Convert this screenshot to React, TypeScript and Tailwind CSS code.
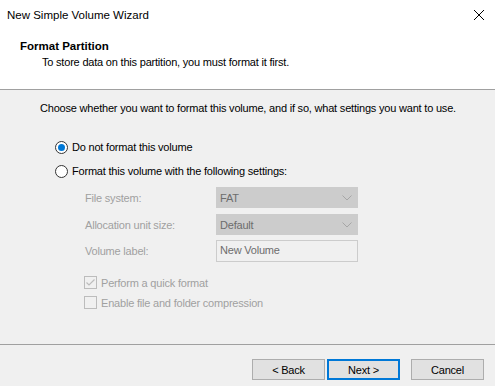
import React from "react";

const font = { fontFamily: '"Liberation Sans", Arial, sans-serif' };

function Chevron() {
  return (
    <svg width="10" height="6" viewBox="0 0 10 6" className="block">
      <path d="M0.5 0.5 L5 5 L9.5 0.5" fill="none" stroke="#a6a6a6" strokeWidth="1" />
    </svg>
  );
}

function Combo({ value }: { value: string }) {
  return (
    <div className="w-[142px] h-[21px] bg-[#cccccc] border border-[#cccccc] flex items-center justify-between pl-[3px] pr-[5px] text-[#6d6d6d]">
      <span>{value}</span>
      <Chevron />
    </div>
  );
}

function Radio({ checked, label }: { checked?: boolean; label: string }) {
  return (
    <div className="flex items-center h-[16px]">
      <div className="w-[13px] h-[13px] rounded-full border border-[#333333] bg-white flex items-center justify-center">
        {checked && <div className="w-[7px] h-[7px] rounded-full bg-[#0078d7]" />}
      </div>
      <span className="ml-[4px] text-black">{label}</span>
    </div>
  );
}

function Check({ checked, label }: { checked?: boolean; label: string }) {
  return (
    <div className="flex items-center h-[13px]">
      <div className="w-[13px] h-[13px] border border-[#bcbcbc] bg-[#f0f0f0] flex items-center justify-center">
        {checked && (
          <svg width="11" height="11" viewBox="0 0 11 11" className="block">
            <path d="M1.5 5.5 L4 8 L9.5 2.5" fill="none" stroke="#bcbcbc" strokeWidth="1.2" />
          </svg>
        )}
      </div>
      <span className="ml-[4px] text-[#a0a0a0]">{label}</span>
    </div>
  );
}

function Button({ label, primary }: { label: string; primary?: boolean }) {
  return (
    <button
      className={
        "w-[73px] h-[21px] bg-[#e1e1e1] flex items-center justify-center text-black " +
        (primary ? "border-2 border-[#0078d7]" : "border border-[#adadad]")
      }
    >
      {label}
    </button>
  );
}

export default function App() {
  return (
    <div
      className="w-[495px] h-[386px] flex flex-col bg-[#f0f0f0] text-[11px] tracking-[-0.2px] leading-[16px] overflow-hidden whitespace-nowrap"
      style={font}
    >
      {/* title bar */}
      <div className="h-[30px] bg-white flex items-center justify-between pl-[7px] pr-[11px] text-[11.5px] tracking-normal">
        <span className="text-black">New Simple Volume Wizard</span>
        <svg width="10" height="10" viewBox="0 0 10 10" className="block">
          <path d="M0 0 L10 10 M10 0 L0 10" stroke="#000" strokeWidth="1" />
        </svg>
      </div>

      {/* header */}
      <div className="h-[60px] bg-white border-b border-[#a0a0a0] pt-[8px]">
        <div className="pl-[20px] font-bold text-black text-[11.5px] tracking-normal">Format Partition</div>
        <div className="pl-[42px] text-black">To store data on this partition, you must format it first.</div>
      </div>

      {/* body */}
      <div className="flex-1 pt-[10px] pl-[40px]">
        <div className="text-black">
          Choose whether you want to format this volume, and if so, what settings you want to use.
        </div>
        <div className="mt-[23px] ml-[15px] flex flex-col gap-[8px]">
          <Radio checked label="Do not format this volume" />
          <Radio label="Format this volume with the following settings:" />
        </div>
        <div className="ml-[44px] mt-[8px] flex flex-col text-[#a0a0a0]">
          <div className="flex items-center h-[21px]">
            <span className="w-[132px] pl-[1px]">File system:</span>
            <Combo value="FAT" />
          </div>
          <div className="flex items-center h-[21px] mt-[6px]">
            <span className="w-[132px] pl-[1px]">Allocation unit size:</span>
            <Combo value="Default" />
          </div>
          <div className="flex items-center h-[22px] mt-[5px]">
            <span className="w-[132px] pl-[1px]">Volume label:</span>
            <div className="w-[142px] h-[22px] border border-[#cccccc] bg-[#f0f0f0] pl-[3px] pt-[1px] text-[#6d6d6d]">
              New Volume
            </div>
          </div>
          <div className="mt-[14px] flex flex-col gap-[7px]">
            <Check checked label="Perform a quick format" />
            <Check label="Enable file and folder compression" />
          </div>
        </div>
      </div>

      {/* footer */}
      <div className="h-[42px] border-t border-[#a0a0a0] pt-[14px] pr-[11px] flex justify-end items-start">
        <Button label="< Back" />
        <div className="w-[2px]" />
        <Button label="Next >" primary />
        <div className="w-[11px]" />
        <Button label="Cancel" />
      </div>
    </div>
  );
}
